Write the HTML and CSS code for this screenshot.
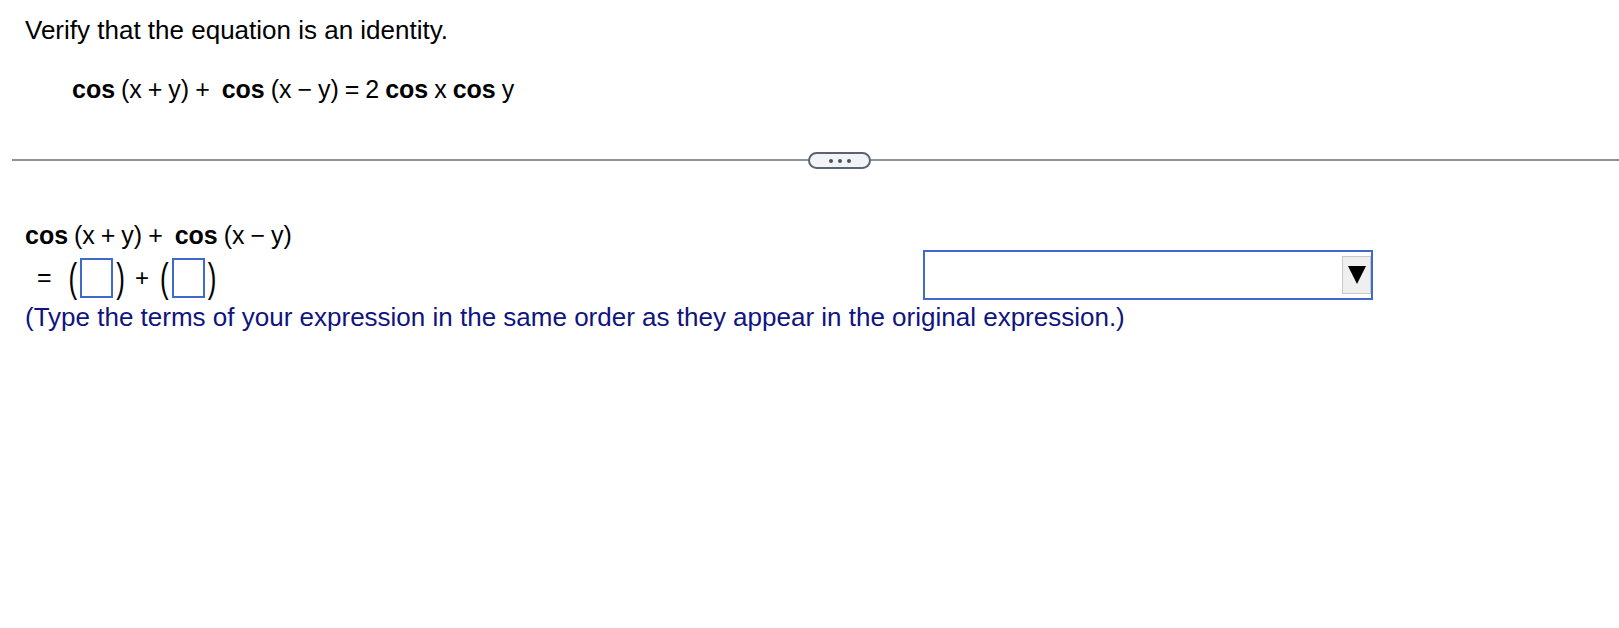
FILE: index.html
```html
<!DOCTYPE html>
<html>
<head>
<meta charset="utf-8">
<link rel="stylesheet" href="styles.css">
</head>
<body>
<div class="page">
  <div class="prompt">Verify that the equation is an identity.</div>
  <div class="eq"><b>cos</b> (x + y) + &nbsp;<b>cos</b> (x − y) = 2 <b>cos</b> x <b>cos</b> y</div>

  <div class="divider">
    <span class="pill"><i></i><i></i><i></i></span>
  </div>

  <div class="answer">
    <div class="lhs"><b>cos</b> (x + y) + &nbsp;<b>cos</b> (x − y)</div>
    <div class="row">
      <div class="expr">
        <span class="eqsign">=</span>
        <span class="paren">(</span><span class="box"></span><span class="paren">)</span>
        <span class="plus">+</span>
        <span class="paren">(</span><span class="box"></span><span class="paren">)</span>
      </div>
      <div class="select">
        <span class="arrow"><svg width="18" height="18" viewBox="0 0 18 18"><polygon points="0,0 18,0 9,18" fill="#000"/></svg></span>
      </div>
    </div>
    <div class="hint">(Type the terms of your expression in the same order as they appear in the original expression.)</div>
  </div>
</div>
</body>
</html>
```
FILE: styles.css
```css
html, body {
  margin: 0;
  padding: 0;
  background: #fff;
}
body {
  font-family: "Liberation Sans", Arial, sans-serif;
  font-size: 26px;
  color: #000;
}
.page {
  padding-top: 15px;
}
.prompt {
  padding-left: 25px;
  line-height: 30px;
}
.eq {
  padding-left: 72px;
  margin-top: 29px;
  line-height: 30px;
  font-size: 25px;
  word-spacing: -1px;
}
.divider {
  position: relative;
  margin-left: 12px;
  margin-top: 55px;
  height: 2px;
  background: #8a939f;
}
.pill {
  position: absolute;
  left: 796px;
  top: -7px;
  width: 59px;
  height: 13px;
  border: 2px solid #5b6571;
  border-radius: 9px;
  background: #f3f4f6;
  display: flex;
  align-items: center;
  justify-content: center;
  gap: 5px;
}
.pill i {
  display: block;
  width: 4px;
  height: 4px;
  border-radius: 50%;
  background: #4a525c;
}
.answer {
  padding-left: 25px;
  margin-top: 59px;
}
.lhs {
  line-height: 30px;
  font-size: 25px;
  word-spacing: -1px;
}
.row {
  display: flex;
  align-items: center;
  height: 51px;
  margin-top: -1px;
  margin-bottom: 2px;
}
.expr {
  display: flex;
  align-items: center;
  width: 898px;
  padding-top: 6px;
}
.eqsign {
  font-size: 25px;
  margin-left: 12px;
  margin-right: 17px;
}
.paren {
  font-size: 26px;
  line-height: 40px;
  transform: scaleY(1.55);
  display: inline-block;
}
.box {
  width: 29px;
  height: 36px;
  border: 2px solid #4169c9;
  margin: 0 3px;
}
.plus {
  font-size: 24px;
  margin: 0 11px 0 10px;
}
.select {
  width: 446px;
  height: 46px;
  border: 2px solid #4169c9;
  display: flex;
  justify-content: flex-end;
  align-items: center;
}
.arrow {
  width: 27px;
  height: 36px;
  border: 1px solid #c8c8c8;
  background: #efefef;
  display: flex;
  align-items: center;
  justify-content: center;
}
.hint {
  color: #0f1480;
  line-height: 30px;
}
```
